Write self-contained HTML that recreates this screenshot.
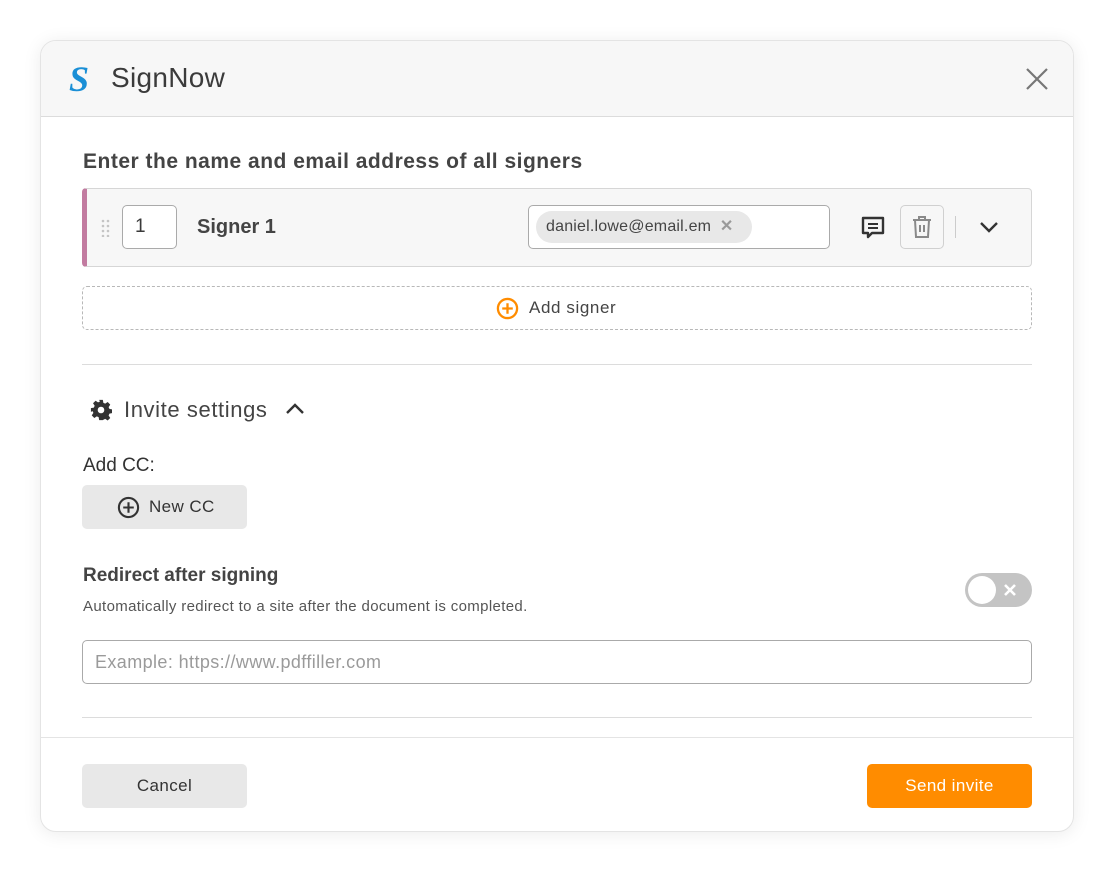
<!DOCTYPE html>
<html><head><meta charset="utf-8"><style>
*{box-sizing:border-box;margin:0;padding:0}
body{width:1114px;height:872px;background:#fff;font-family:"Liberation Sans",sans-serif;color:#3a3a3a;position:relative;overflow:hidden}
.modal{position:absolute;left:40px;top:40px;width:1034px;height:792px;border:1px solid #e4e4e4;border-radius:16px;box-shadow:0 2px 18px rgba(0,0,0,.08);background:#fff;overflow:hidden}
.hdr{position:absolute;left:0;top:0;width:100%;height:76px;background:#f7f7f7;border-bottom:1px solid #dcdcdc}
.abs{position:absolute}
</style></head><body>
<div class="modal">
<div class="hdr">
<div class="abs" style="left:28px;top:18px;font-family:'Liberation Serif',serif;font-style:italic;font-weight:bold;font-size:36px;color:#1a8fd6;line-height:40px">S</div>
<div class="abs" style="left:70px;top:20px;font-size:28px;color:#3b3b3b;line-height:34px;letter-spacing:.3px">SignNow</div>
<svg class="abs" style="left:984px;top:26px" width="24" height="24" viewBox="0 0 24 24"><path d="M2 2L22 22M22 2L2 22" stroke="#777" stroke-width="2.2"/></svg>
</div>
</div>
<div class="abs" style="left:83px;top:148px;font-size:21px;font-weight:bold;color:#444;line-height:28px;letter-spacing:.5px">Enter the name and email address of all signers</div>
<div class="abs" style="left:82px;top:188px;width:950px;height:79px;background:#f7f7f7;border:1px solid #d6d6d6;border-left:5px solid #c27ba0;border-radius:4px"></div>
<svg class="abs" style="left:101px;top:219px" width="10" height="18"><g fill="#c4c4c4"><circle cx="2" cy="2" r="1.3"/><circle cx="7" cy="2" r="1.3"/><circle cx="2" cy="7" r="1.3"/><circle cx="7" cy="7" r="1.3"/><circle cx="2" cy="12" r="1.3"/><circle cx="7" cy="12" r="1.3"/><circle cx="2" cy="17" r="1.3"/><circle cx="7" cy="17" r="1.3"/></g></svg>
<div class="abs" style="left:122px;top:205px;width:55px;height:44px;background:#fff;border:1px solid #aaa;border-radius:5px;font-size:19px;line-height:42px;padding-left:12px">1</div>
<div class="abs" style="left:197px;top:214px;font-size:20px;font-weight:bold;color:#444;line-height:26px">Signer 1</div>
<div class="abs" style="left:528px;top:205px;width:302px;height:44px;background:#fff;border:1px solid #aaa;border-radius:5px"></div>
<div class="abs" style="left:536px;top:211px;width:216px;height:32px;background:#e8e8e8;border-radius:16px;font-size:16px;line-height:32px;padding-left:10px;color:#444;letter-spacing:.2px">daniel.lowe@email.em <span style="color:#999;font-weight:bold;margin-left:4px">✕</span></div>
<svg class="abs" style="left:860px;top:215px" width="26" height="26" viewBox="0 0 26 26"><path d="M3 3H23V18H12L8 22V18H3Z" fill="none" stroke="#333" stroke-width="2.4" stroke-linejoin="round"/><path d="M8 9H18M8 13H18" stroke="#333" stroke-width="2"/></svg>
<div class="abs" style="left:900px;top:205px;width:44px;height:44px;border:1px solid #d0d0d0;border-radius:5px"></div>
<svg class="abs" style="left:910px;top:214px" width="24" height="26" viewBox="0 0 24 26"><path d="M3 6H21M9 6V3H15V6M5 6L6 23H18L19 6M10 11V18M14 11V18" fill="none" stroke="#8a8a8a" stroke-width="2"/></svg>
<div class="abs" style="left:955px;top:216px;width:1px;height:22px;background:#ccc"></div>
<svg class="abs" style="left:979px;top:220px" width="20" height="14"><path d="M2 3L10 11L18 3" fill="none" stroke="#333" stroke-width="2.4"/></svg>
<div class="abs" style="left:82px;top:286px;width:950px;height:44px;border:1.5px dashed #b8b8b8;border-radius:5px"></div>
<svg class="abs" style="left:496px;top:297px" width="23" height="23" viewBox="0 0 24 24"><circle cx="12" cy="12" r="10" fill="none" stroke="#ff8c00" stroke-width="2.4"/><path d="M12 6.5V17.5M6.5 12H17.5" stroke="#ff8c00" stroke-width="2.4"/></svg>
<div class="abs" style="left:529px;top:297px;font-size:17px;line-height:22px;color:#444;letter-spacing:.6px">Add signer</div>
<div class="abs" style="left:82px;top:364px;width:950px;height:1px;background:#dcdcdc"></div>
<svg class="abs" style="left:90px;top:399px" width="22" height="22" viewBox="0 0 24 24"><path fill="#333" d="M10 1h4l.6 3.2 2 .9 2.7-1.8 2.8 2.8-1.8 2.7.9 2 3.2.6v4l-3.2.6-.9 2 1.8 2.7-2.8 2.8-2.7-1.8-2 .9L14 23h-4l-.6-3.2-2-.9-2.7 1.8-2.8-2.8 1.8-2.7-.9-2L1 14v-4l3.2-.6.9-2-1.8-2.7 2.8-2.8 2.7 1.8 2-.9z"/><circle cx="12" cy="12" r="3.6" fill="#fff"/></svg>
<div class="abs" style="left:124px;top:396px;font-size:22px;color:#444;line-height:28px;letter-spacing:.6px">Invite settings</div>
<svg class="abs" style="left:285px;top:402px" width="20" height="14"><path d="M2 11L10 3L18 11" fill="none" stroke="#333" stroke-width="2.4"/></svg>
<div class="abs" style="left:83px;top:454px;font-size:19px;color:#333;line-height:24px">Add CC:</div>
<div class="abs" style="left:82px;top:485px;width:165px;height:44px;background:#e8e8e8;border-radius:5px"></div>
<svg class="abs" style="left:117px;top:496px" width="23" height="23" viewBox="0 0 24 24"><circle cx="12" cy="12" r="10" fill="none" stroke="#333" stroke-width="2.2"/><path d="M12 6.5V17.5M6.5 12H17.5" stroke="#333" stroke-width="2.2"/></svg>
<div class="abs" style="left:149px;top:496px;font-size:17px;line-height:22px;color:#333;letter-spacing:.4px">New CC</div>
<div class="abs" style="left:83px;top:564px;font-size:19px;font-weight:bold;color:#444;line-height:24px">Redirect after signing</div>
<div class="abs" style="left:83px;top:597px;font-size:15px;color:#555;line-height:20px;letter-spacing:.35px">Automatically redirect to a site after the document is completed.</div>
<div class="abs" style="left:965px;top:573px;width:67px;height:34px;background:#c4c4c4;border-radius:17px"></div>
<div class="abs" style="left:968px;top:576px;width:28px;height:28px;background:#fff;border-radius:50%"></div>
<svg class="abs" style="left:1004px;top:584px" width="12" height="12"><path d="M1 1L11 11M11 1L1 11" stroke="#fff" stroke-width="2.6"/></svg>
<div class="abs" style="left:82px;top:640px;width:950px;height:44px;border:1px solid #aaa;border-radius:5px;font-size:18px;color:#9a9a9a;line-height:42px;padding-left:12px;letter-spacing:.4px">Example: https://www.pdffiller.com</div>
<div class="abs" style="left:82px;top:717px;width:950px;height:1px;background:#dcdcdc"></div>
<div class="abs" style="left:41px;top:737px;width:1032px;height:1px;background:#e4e4e4"></div>
<div class="abs" style="left:82px;top:764px;width:165px;height:44px;background:#e8e8e8;border-radius:5px;font-size:17px;line-height:44px;text-align:center;color:#333;letter-spacing:.4px">Cancel</div>
<div class="abs" style="left:867px;top:764px;width:165px;height:44px;background:#ff8c00;border-radius:5px;font-size:17px;line-height:44px;text-align:center;color:#fff;letter-spacing:.4px">Send invite</div>
</body></html>
